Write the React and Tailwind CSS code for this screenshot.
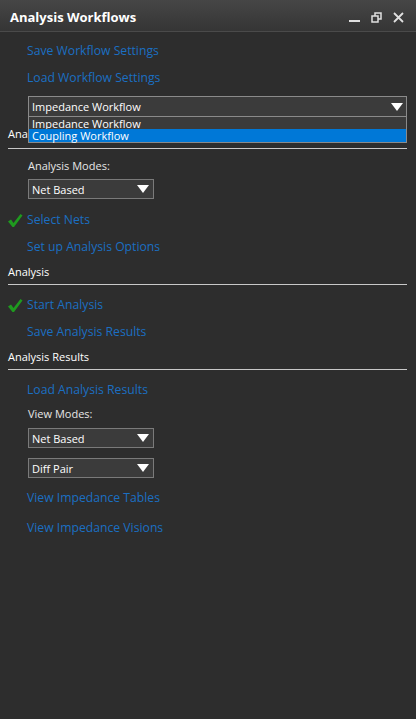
import React from "react";

const font = { fontFamily: '"Open Sans", "Noto Sans", sans-serif' };

function Check() {
  return (
    <svg width="16" height="15" viewBox="0 0 16 15" className="shrink-0">
      <path d="M1 8.5 L4 6.5 L6.5 10 L13.5 1 L15.5 2.5 L7 14 L5.5 14 Z" fill="#1f9a1f" />
    </svg>
  );
}

function Tri() {
  return (
    <svg width="12" height="8" viewBox="0 0 12 8">
      <path d="M0 0 H12 L6 8 Z" fill="#fff" />
    </svg>
  );
}

function Link({ children, check, className = "" }) {
  return (
    <div className={"flex items-center h-[20px] " + className}>
      <div className="w-[27px] flex justify-start pl-[7px]">{check ? <Check /> : null}</div>
      <span className="text-[12.2px] text-[#1b6fc2] leading-none">{children}</span>
    </div>
  );
}

function Small({ label, className = "" }) {
  return (
    <div className={"ml-[28px] w-[126px] h-[20px] border border-[#7a7a7a] bg-[#3b3b3b] flex items-center justify-between pl-[3px] pr-[4px] " + className}>
      <span className="text-[11px] text-white leading-none">{label}</span>
      <Tri />
    </div>
  );
}

function Header({ children, className = "" }) {
  return (
    <div className={"ml-[8px] h-[18px] flex items-center text-[11px] text-white leading-none " + className}>
      {children}
    </div>
  );
}

function Rule({ className = "" }) {
  return <div className={"ml-[8px] mr-[9px] h-px bg-[#c8c8c8] " + className} />;
}

export default function App() {
  return (
    <div className="w-[416px] h-[719px] bg-[#2d2d2d] flex flex-col overflow-hidden" style={font}>
      <div className="h-[32px] shrink-0 bg-gradient-to-b from-[#464646] to-[#353535] border-b border-[#4a4a4a] flex items-center justify-between pl-[10px] pr-[12px]">
        <span className="text-[13px] font-bold text-white pt-[4px]">Analysis Workflows</span>
        <div className="flex items-center gap-[11px] pt-[4px]">
          <svg width="11" height="11" viewBox="0 0 11 11"><rect x="0" y="8" width="11" height="2" fill="#e0e0e0" /></svg>
          <svg width="11" height="11" viewBox="0 0 11 11" fill="none" stroke="#e0e0e0" strokeWidth="1.5">
            <rect x="1" y="4" width="6" height="6" />
            <path d="M4 4 V1 H10 V7 H7" />
          </svg>
          <svg width="11" height="11" viewBox="0 0 11 11" stroke="#e0e0e0" strokeWidth="1.8"><path d="M1 1 L10 10 M10 1 L1 10" /></svg>
        </div>
      </div>

      <div className="flex flex-col">
        <Link className="mt-[9px]">Save Workflow Settings</Link>
        <Link className="mt-[7px]">Load Workflow Settings</Link>

        <div className="relative mt-[8px]">
          <div className="ml-[28px] mr-[9px] h-[21px] border border-[#8a8a8a] bg-[#3b3b3b] flex items-center justify-between pl-[3px] pr-[3px]">
            <span className="text-[11px] text-white leading-none">Impedance Workflow</span>
            <Tri />
          </div>
          <div className="absolute z-10 left-[28px] right-[9px] top-[20px] border border-[#8a8a8a] bg-[#3b3b3b] flex flex-col">
            <div className="h-[12px] flex items-center pl-[3px] text-[11px] text-white leading-none">Impedance Workflow</div>
            <div className="h-[13px] flex items-center pl-[3px] bg-[#0078d7] text-[11px] text-white leading-none">Coupling Workflow</div>
          </div>
          <Header className="mt-[7px]">Analysis Setup</Header>
        </div>
        <Rule className="mt-[6px]" />

        <div className="ml-[28px] mt-[8px] h-[16px] flex items-center text-[11px] text-[#e6e6e6] leading-none">Analysis Modes:</div>
        <Small label="Net Based" className="mt-[6px]" />
        <Link check className="mt-[11px]">Select Nets</Link>
        <Link className="mt-[7px]">Set up Analysis Options</Link>
        <Header className="mt-[5px]">Analysis</Header>
        <Rule className="mt-[4px]" />
        <Link check className="mt-[10px]">Start Analysis</Link>
        <Link className="mt-[7px]">Save Analysis Results</Link>
        <Header className="mt-[5px]">Analysis Results</Header>
        <Rule className="mt-[4px]" />
        <Link className="mt-[10px]">Load Analysis Results</Link>
        <div className="ml-[28px] mt-[4px] h-[18px] flex items-center text-[11px] text-[#e6e6e6] leading-none">View Modes:</div>
        <Small label="Net Based" className="mt-[6px]" />
        <Small label="Diff Pair" className="mt-[10px]" />
        <Link className="mt-[10px]">View Impedance Tables</Link>
        <Link className="mt-[10px]">View Impedance Visions</Link>
      </div>
    </div>
  );
}
